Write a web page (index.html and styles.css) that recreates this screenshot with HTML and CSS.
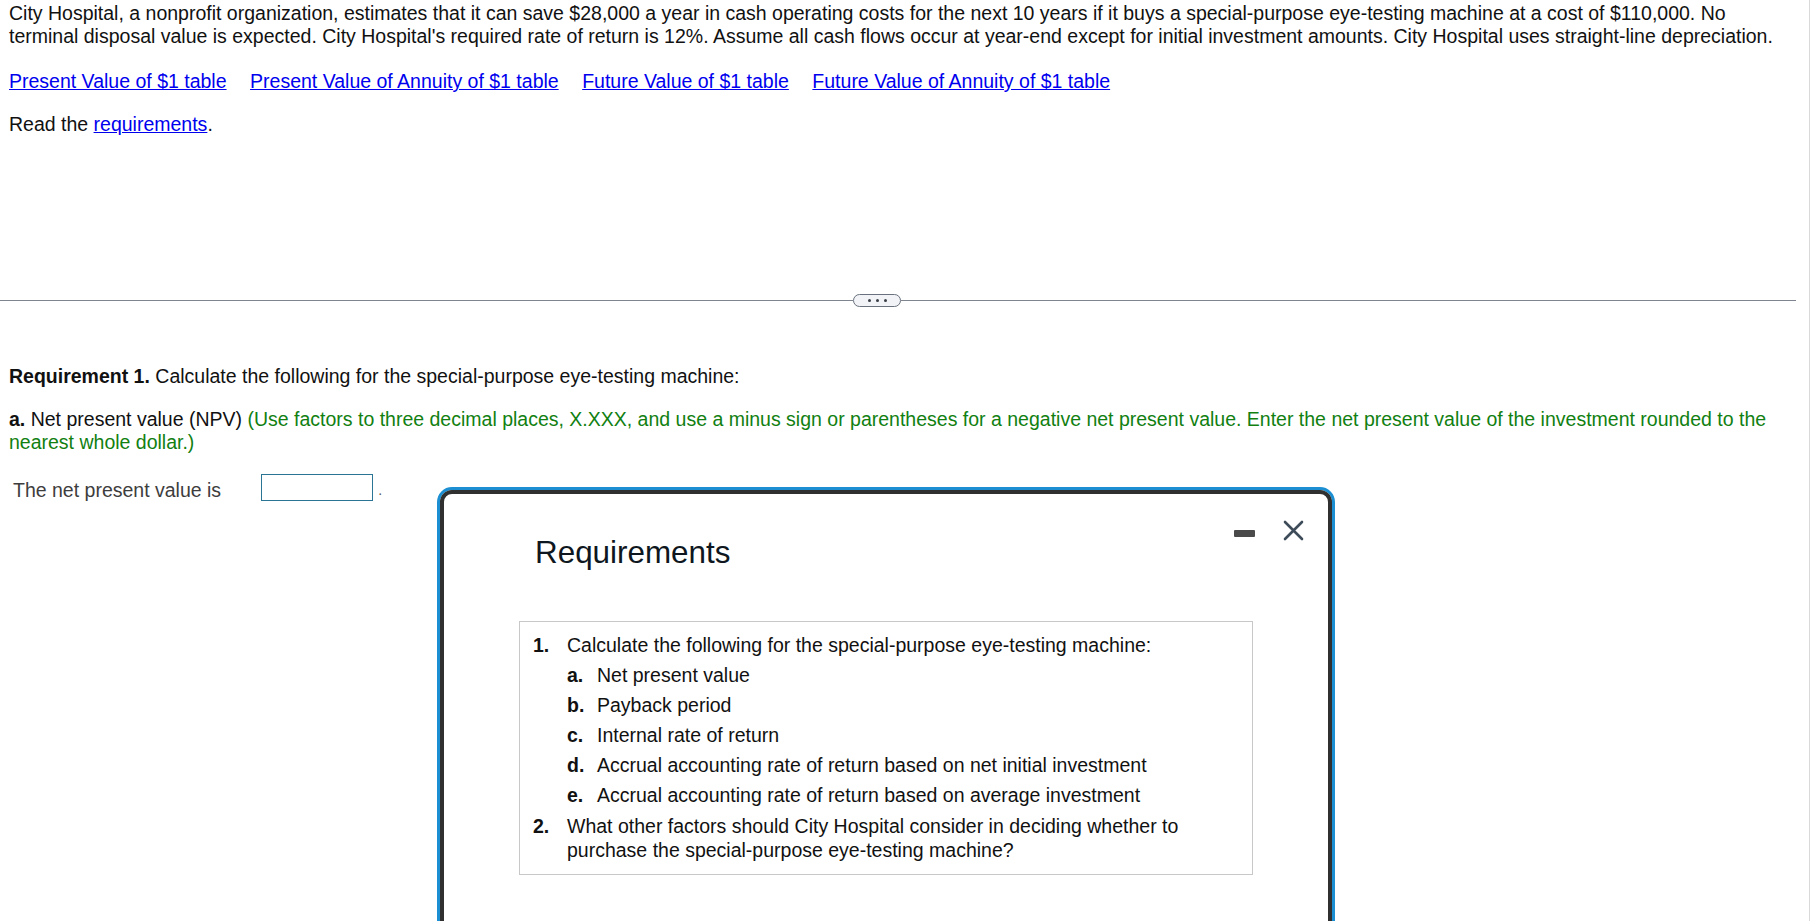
FILE: index.html
```html
<!DOCTYPE html>
<html lang="en">
<head>
<meta charset="utf-8">
<title>City Hospital</title>
<link rel="stylesheet" href="styles.css">
</head>
<body>
<div class="page">
  <div class="top">
    <p class="intro">City Hospital, a nonprofit organization, estimates that it can save $28,000 a year in cash operating costs for the next 10 years if it buys a special-purpose eye-testing machine at a cost of $110,000. No terminal disposal value is expected. City Hospital's required rate of return is 12%. Assume all cash flows occur at year-end except for initial investment amounts. City Hospital uses straight-line depreciation.</p>
    <div class="links">
      <a href="#">Present Value of $1 table</a>
      <a href="#">Present Value of Annuity of $1 table</a>
      <a href="#">Future Value of $1 table</a>
      <a href="#">Future Value of Annuity of $1 table</a>
    </div>
    <p class="read">Read the <a href="#">requirements</a>.</p>
  </div>

  <div class="divider">
    <span class="rule rule-left"></span>
    <span class="pill"><i></i><i></i><i></i></span>
    <span class="rule rule-right"></span>
  </div>

  <div class="bottom">
    <p class="req-title"><b>Requirement 1.</b> Calculate the following for the special-purpose eye-testing machine:</p>
    <p class="req-a"><b>a.</b> Net present value (NPV) <span class="hint">(Use factors to three decimal places, X.XXX, and use a minus sign or parentheses for a negative net present value. Enter the net present value of the investment rounded to the nearest whole dollar.)</span></p>
    <div class="answer-row">
      <span class="answer-label">The net present value is</span>
      <span class="answer-input"></span>
      <span class="answer-dot">.</span>
    </div>
  </div>

  <div class="modal">
    <div class="modal-head">
      <h2 class="modal-title">Requirements</h2>
      <div class="modal-controls">
        <span class="minimize"></span>
        <svg class="close" width="21" height="21" viewBox="0 0 21 21" aria-hidden="true">
          <path d="M2 2 L19 19 M19 2 L2 19" stroke="#3e4b59" stroke-width="2.6" stroke-linecap="round" fill="none"/>
        </svg>
      </div>
    </div>
    <div class="req-box">
      <div class="item">
        <span class="num">1.</span>
        <div class="item-body">
          <div class="line">Calculate the following for the special-purpose eye-testing machine:</div>
          <div class="sub"><span class="letter">a.</span><span>Net present value</span></div>
          <div class="sub"><span class="letter">b.</span><span>Payback period</span></div>
          <div class="sub"><span class="letter">c.</span><span>Internal rate of return</span></div>
          <div class="sub"><span class="letter">d.</span><span>Accrual accounting rate of return based on net initial investment</span></div>
          <div class="sub"><span class="letter">e.</span><span>Accrual accounting rate of return based on average investment</span></div>
        </div>
      </div>
      <div class="item item-2">
        <span class="num">2.</span>
        <div class="item-body">
          <div class="line">What other factors should City Hospital consider in deciding whether to purchase the special-purpose eye-testing machine?</div>
        </div>
      </div>
    </div>
  </div>
</div>
</body>
</html>
```

FILE: styles.css
```css
html, body {
  margin: 0;
  padding: 0;
  height: 921px;
  overflow: hidden;
  background: #ffffff;
}

body {
  font-family: "Liberation Sans", Arial, sans-serif;
  font-size: 19.5px;
  line-height: 23px;
  color: #111111;
}

.page {
  position: relative;
  width: 1809px;
  height: 921px;
  border-right: 1px solid #d9d9d9;
}

p {
  margin: 0;
}

a {
  color: #0000ee;
  text-decoration: underline;
}

.top {
  padding: 2px 9px 0 9px;
}

.intro {
  color: #111111;
}

.links {
  display: flex;
  gap: 23.5px;
  margin-top: 22px;
}

.read {
  margin-top: 20px;
}

.divider {
  display: flex;
  align-items: center;
  width: 1796px;
  height: 13px;
  margin-top: 158px;
}

.rule {
  display: block;
  height: 1px;
  background: #7f858e;
}

.rule-left {
  width: 853px;
}

.rule-right {
  flex: 1;
}

.pill {
  box-sizing: border-box;
  width: 48px;
  height: 13px;
  border: 1px solid #69717e;
  border-radius: 7px;
  background: #f1f3f6;
  display: flex;
  align-items: center;
  justify-content: center;
  gap: 5px;
}

.pill i {
  display: block;
  width: 3px;
  height: 3px;
  border-radius: 50%;
  background: #3a3f47;
}

.bottom {
  padding: 0 9px;
}

.req-title {
  margin-top: 58px;
}

.req-a {
  margin-top: 20px;
}

.hint {
  color: #118011;
}

.answer-row {
  display: flex;
  align-items: flex-start;
  margin-top: 20px;
}

.answer-label {
  margin-top: 5px;
  padding-left: 4px;
  color: #3d3d3d;
}

.answer-input {
  box-sizing: border-box;
  display: block;
  width: 112px;
  height: 27px;
  margin-left: 40px;
  border: 1px solid #2b7494;
  background: #ffffff;
}

.answer-dot {
  margin-top: 5px;
  margin-left: 5px;
  font-size: 14px;
  color: #555555;
}

.modal {
  position: absolute;
  left: 437px;
  top: 487px;
  box-sizing: border-box;
  width: 898px;
  height: 470px;
  border: 3px solid #1c8fd2;
  border-radius: 15px;
  background: #ffffff;
}

.modal::before {
  content: "";
  position: absolute;
  inset: 0;
  border: 4px solid #303030;
  border-radius: 12px;
  pointer-events: none;
}

.modal-head {
  display: flex;
  justify-content: space-between;
  align-items: flex-start;
  padding: 30px 28px 0 95px;
}

.modal-title {
  margin: 14px 0 0 0;
  font-size: 31.4px;
  line-height: 38px;
  font-weight: normal;
  color: #0e1620;
}

.modal-controls {
  display: flex;
  align-items: flex-start;
  gap: 28px;
}

.minimize {
  display: block;
  width: 21px;
  height: 7px;
  margin-top: 10px;
  border-radius: 1px;
  background: #4a4a4a;
}

.close {
  display: block;
}

.req-box {
  box-sizing: border-box;
  width: 734px;
  margin: 49px 0 0 79px;
  padding: 12px 13px 12px 13px;
  border: 1px solid #c8c8c8;
  color: #111111;
}

.item {
  display: flex;
}

.item-2 {
  margin-top: 7px;
  line-height: 24px;
}

.num {
  flex: 0 0 34px;
  font-weight: bold;
}

.item-body {
  flex: 1;
}

.sub {
  display: flex;
  margin-top: 7px;
}

.letter {
  flex: 0 0 30px;
  font-weight: bold;
}
```
